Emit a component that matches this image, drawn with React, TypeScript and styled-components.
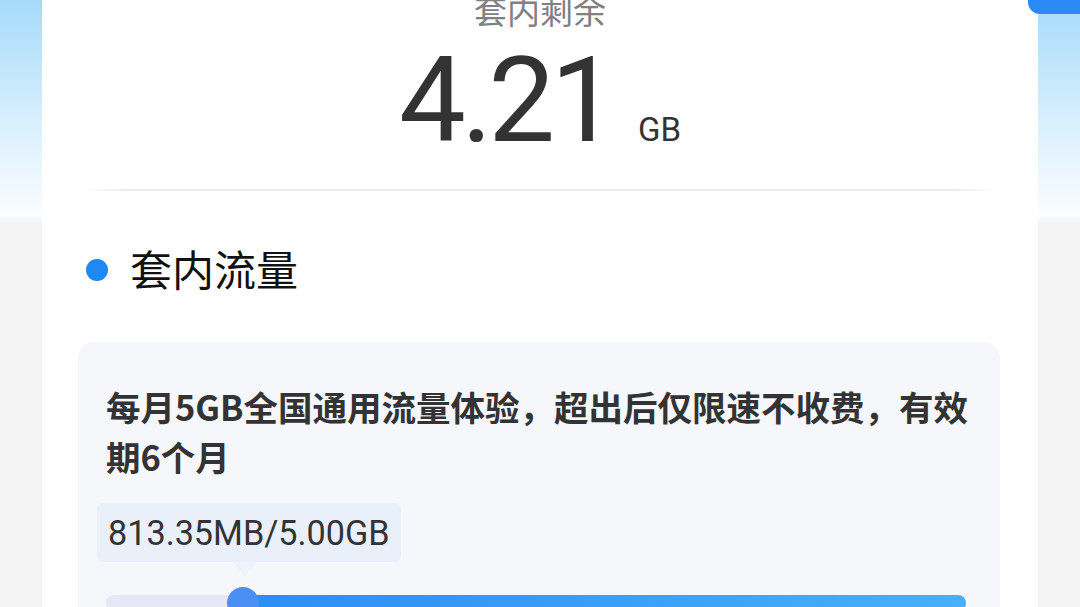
import React from "react";
import styled, { createGlobalStyle } from "styled-components";

const GlobalStyle = createGlobalStyle`
  html, body {
    margin: 0;
    padding: 0;
    width: 1080px;
    height: 607px;
    overflow: hidden;
    font-family: "Noto Sans CJK SC", "Noto Sans", sans-serif;
  }
`;

const Page = styled.div`
  position: relative;
  height: 607px;
  padding: 0 42px;
  box-sizing: border-box;
  overflow: hidden;
  background: linear-gradient(
    to bottom,
    #a6dafb 0px,
    #d8effd 120px,
    #fbfdff 215px,
    #f3f3f3 224px,
    #f3f3f3 100%
  );
`;

const FloatTab = styled.div`
  position: absolute;
  top: 0;
  right: 0;
  width: 52px;
  height: 14px;
  background: #2b8af7;
  border-bottom-left-radius: 12px;
`;

const Card = styled.div`
  height: 100%;
  background: #ffffff;
  display: flex;
  flex-direction: column;
`;

const Summary = styled.div`
  display: flex;
  flex-direction: column;
  align-items: center;
`;

const SummaryLabel = styled.div`
  margin-top: -10px;
  height: 40px;
  font-size: 33px;
  line-height: 40px;
  color: #808080;
`;

const AmountRow = styled.div`
  margin-top: 12px;
  height: 118px;
  display: flex;
  align-items: baseline;
  gap: 25px;
`;

const Amount = styled.span`
  font-family: Roboto, "Liberation Sans", sans-serif;
  font-size: 119px;
  line-height: 118px;
  letter-spacing: -4.5px;
  color: #333333;
`;

const Unit = styled.span`
  font-family: Roboto, "Liberation Sans", sans-serif;
  font-size: 33px;
  color: #333333;
`;

const Divider = styled.div`
  margin: 29px 43px 0;
  height: 2px;
  flex-shrink: 0;
  background: linear-gradient(
    to right,
    rgba(232, 232, 232, 0) 0%,
    #e9e9e9 5%,
    #e9e9e9 95%,
    rgba(232, 232, 232, 0) 100%
  );
`;

const SectionTitle = styled.div`
  margin: 54px 0 0 44px;
  height: 50px;
  flex-shrink: 0;
  display: flex;
  align-items: center;
  gap: 22px;
`;

const Dot = styled.span`
  width: 22px;
  height: 22px;
  border-radius: 50%;
  background: #1e88f5;
`;

const TitleText = styled.span`
  font-size: 42px;
  line-height: 50px;
  color: #111111;
  margin-top: -4px;
`;

const Panel = styled.div`
  margin: 47px 38px 0 36px;
  padding: 39px 28px 0;
  flex: 1;
  border-radius: 16px 16px 0 0;
  background: #f6f7fb;
  display: flex;
  flex-direction: column;
  align-items: flex-start;
`;

const Description = styled.div`
  font-size: 34.5px;
  line-height: 50px;
  font-weight: 700;
  color: #333333;
`;

const Tip = styled.div`
  position: relative;
  margin: 22px 0 0 -9px;
  height: 59px;
  flex-shrink: 0;
  padding: 0 11px;
  display: flex;
  align-items: center;
  border-radius: 6px;
  background: #e9f0fa;
  font-family: Roboto, "Liberation Sans", sans-serif;
  font-size: 34.2px;
  color: #333333;
`;

const TipArrow = styled.span<{ $left: number }>`
  position: absolute;
  top: 59px;
  left: ${(p) => p.$left}px;
  width: 0;
  height: 0;
  margin-left: -12px;
  border-left: 12px solid transparent;
  border-right: 12px solid transparent;
  border-top: 14px solid #eef3fb;
`;

const Track = styled.div`
  position: relative;
  margin-top: 33px;
  align-self: stretch;
  margin-right: 6px;
  height: 16px;
  flex-shrink: 0;
  border-radius: 8px;
  background: #e6e7f7;
`;

const Fill = styled.div`
  position: absolute;
  right: 0;
  top: 0;
  bottom: 0;
  border-radius: 0 8px 8px 0;
  background: linear-gradient(to right, #2f8cf5, #47b0f7);
`;

const Knob = styled.span`
  position: absolute;
  top: -8px;
  width: 32px;
  height: 32px;
  margin-left: -16px;
  border-radius: 50%;
  background: #4a90f4;
`;

export default function App() {
  const used = 813.35;
  const total = 5 * 1024;
  const ratio = used / total;
  const pct = ratio * 100;
  return (
    <>
      <GlobalStyle />
      <Page>
        <Card>
          <Summary>
            <SummaryLabel>套内剩余</SummaryLabel>
            <AmountRow>
              <Amount>4.21</Amount>
              <Unit>GB</Unit>
            </AmountRow>
          </Summary>
          <Divider />
          <SectionTitle>
            <Dot />
            <TitleText>套内流量</TitleText>
          </SectionTitle>
          <Panel>
            <Description>
              每月5GB全国通用流量体验，超出后仅限速不收费，有效期6个月
            </Description>
            <Tip>
              813.35MB/5.00GB
              <TipArrow $left={148} />
            </Tip>
            <Track>
              <Fill style={{ width: `${100 - pct}%` }} />
              <Knob style={{ left: `${pct}%` }} />
            </Track>
          </Panel>
        </Card>
        <FloatTab />
      </Page>
    </>
  );
}
